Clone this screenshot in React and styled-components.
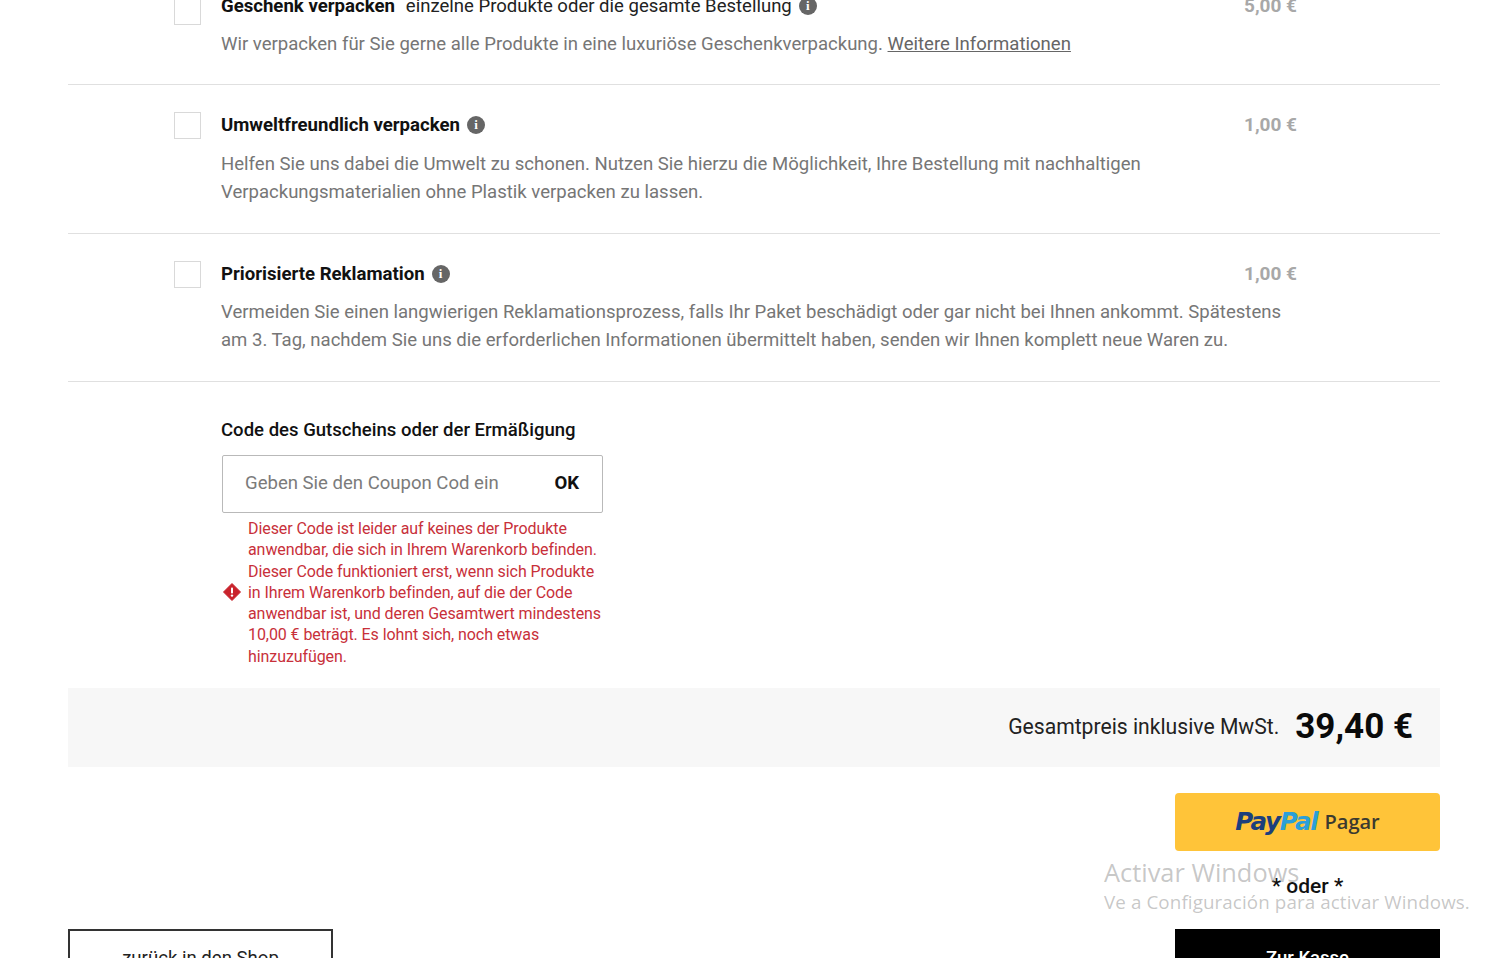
import React from "react";
import styled, { createGlobalStyle } from "styled-components";

const GlobalStyle = createGlobalStyle`
  html, body {
    margin: 0;
    padding: 0;
    background: #fff;
    overflow: hidden;
    font-family: Roboto, "Liberation Sans", sans-serif;
  }
`;

const Viewport = styled.div`
  position: relative;
  width: 1500px;
  height: 958px;
  overflow: hidden;
`;

const Page = styled.div`
  width: 1372px;
  margin: -15px 0 0 68px;
`;

const OptionRow = styled.div`
  display: grid;
  grid-template-columns: 27px 1fr auto;
  grid-template-rows: 27px auto;
  column-gap: 20px;
  align-content: start;
  padding: ${(p) => p.$top}px 143px 0 106px;
  height: ${(p) => p.$height}px;
  box-sizing: border-box;
  border-bottom: 1px solid #e0e0e0;
`;

const CheckBox = styled.div`
  width: 27px;
  height: 27px;
  margin-top: ${(p) => p.$nudge || 0}px;
  box-sizing: border-box;
  border: 1px solid #d9d9d9;
  background: #fff;
`;

const TitleLine = styled.div`
  display: flex;
  align-items: center;
  height: ${(p) => p.$height || 27}px;
  font-size: 18.6px;
  color: #111;
`;

const Title = styled.span`
  font-weight: 700;
`;

const TitleNote = styled.span`
  margin-left: 11px;
  font-size: 18.55px;
  color: #222;
`;

const InfoDot = styled.span`
  display: inline-flex;
  align-items: center;
  justify-content: center;
  width: 18px;
  height: 18px;
  margin-left: 7px;
  border-radius: 50%;
  background: #666;
  color: #fff;
  font-size: 13px;
  font-weight: 700;
  font-family: "Liberation Serif", serif;
`;

const Desc = styled.p`
  grid-column: 2 / 4;
  margin: 11px 0 0;
  font-size: 18.56px;
  line-height: 28px;
  color: #767676;
`;

const DocLink = styled.a`
  color: #666;
  text-decoration: underline;
`;

const Price = styled.div`
  height: ${(p) => p.$height || 27}px;
  line-height: ${(p) => p.$height || 27}px;
  text-align: right;
  font-size: 19px;
  font-weight: 700;
  color: #a8a8a8;
`;

const CouponSection = styled.section`
  padding: 35px 0 0 153px;
  height: 306px;
  box-sizing: border-box;
`;

const CouponLabel = styled.div`
  font-size: 18.56px;
  line-height: 26px;
  font-weight: 500;
  color: #111;
`;

const CouponBox = styled.div`
  display: flex;
  align-items: center;
  justify-content: space-between;
  width: 381px;
  height: 58px;
  margin: 12px 0 0 1px;
  padding: 0 23px 2px 22px;
  box-sizing: border-box;
  border: 1px solid #b9b9b9;
  border-radius: 2px;
  font-size: 18.56px;
  color: #7b7b7b;
`;

const OkLabel = styled.span`
  font-weight: 700;
  color: #111;
`;

const ErrorRow = styled.div`
  display: flex;
  align-items: center;
  width: 384px;
  margin-top: 5px;
`;

const ErrorIcon = styled.svg`
  flex: none;
  width: 20px;
  height: 20px;
  margin: 0 6px 0 1px;
`;

const ErrorText = styled.div`
  font-size: 16px;
  line-height: 21.25px;
  color: #c8303a;
  white-space: pre-line;
  letter-spacing: -0.08px;
`;

const TotalBar = styled.div`
  display: flex;
  align-items: center;
  justify-content: flex-end;
  height: 79px;
  padding: 0 27px 2px 0;
  box-sizing: border-box;
  background: #f7f7f7;
`;

const TotalLabel = styled.span`
  font-size: 21.15px;
  color: #222;
`;

const TotalValue = styled.span`
  margin-left: 16px;
  font-size: 35px;
  font-weight: 700;
  color: #0a0a0a;
`;

const BottomArea = styled.div`
  display: flex;
  justify-content: space-between;
  align-items: flex-end;
  margin-top: 26px;
`;

const CheckoutColumn = styled.div`
  display: flex;
  flex-direction: column;
  width: 265px;
`;

const PayPalButton = styled.div`
  display: flex;
  align-items: center;
  justify-content: center;
  height: 58px;
  padding-bottom: 1px;
  box-sizing: border-box;
  border-radius: 4px;
  background: #ffc439;
`;

const PayPalMark = styled.span`
  font-family: "DejaVu Sans", sans-serif;
  font-size: 24.5px;
  font-weight: 700;
  font-style: italic;
  letter-spacing: -1.2px;
  color: #1c3f7c;
`;

const PayPalAccent = styled.span`
  color: #2b9fd8;
`;

const PagarLabel = styled.span`
  margin-left: 7px;
  font-family: "Open Sans", sans-serif;
  font-size: 20px;
  font-weight: 600;
  color: #3b3a30;
`;

const OrLabel = styled.div`
  margin-top: 22px;
  height: 26px;
  line-height: 26px;
  text-align: center;
  font-size: 21px;
  font-weight: 500;
  color: #111;
`;

const OutlineButton = styled.div`
  width: 265px;
  height: 58px;
  box-sizing: border-box;
  display: flex;
  align-items: center;
  justify-content: center;
  border: 2px solid #333;
  font-size: 18.6px;
  color: #222;
`;

const BlackButton = styled.div`
  height: 58px;
  margin-top: 30px;
  display: flex;
  align-items: center;
  justify-content: center;
  background: #000;
  font-size: 18.5px;
  font-weight: 500;
  color: #fff;
`;

const Watermark = styled.div`
  position: absolute;
  left: 1104px;
  top: 855px;
  font-family: "Open Sans", sans-serif;
  color: rgba(120, 120, 120, 0.42);
  pointer-events: none;
`;

const WatermarkTitle = styled.div`
  font-size: 25.4px;
  line-height: 34px;
  font-weight: 400;
`;

const WatermarkText = styled.div`
  font-size: 18.8px;
  line-height: 26px;
  letter-spacing: 0.1px;
  white-space: nowrap;
`;

const options = [
  {
    title: "Umweltfreundlich verpacken",
    price: "1,00 €",
    lines: "Helfen Sie uns dabei die Umwelt zu schonen. Nutzen Sie hierzu die Möglichkeit, Ihre Bestellung mit nachhaltigen\nVerpackungsmaterialien ohne Plastik verpacken zu lassen.",
    height: 149,
    top: 27,
    titleHeight: 26,
    nudge: 0,
  },
  {
    title: "Priorisierte Reklamation",
    price: "1,00 €",
    lines: "Vermeiden Sie einen langwierigen Reklamationsprozess, falls Ihr Paket beschädigt oder gar nicht bei Ihnen ankommt. Spätestens am 3. Tag, nachdem Sie uns die erforderlichen Informationen übermittelt haben, senden wir Ihnen komplett neue Waren zu.",
    height: 148,
    top: 26,
    titleHeight: 27,
    nudge: 1,
  },
];

const errorMessage = `Dieser Code ist leider auf keines der Produkte
anwendbar, die sich in Ihrem Warenkorb befinden.
Dieser Code funktioniert erst, wenn sich Produkte
in Ihrem Warenkorb befinden, auf die der Code
anwendbar ist, und deren Gesamtwert mindestens
10,00 € beträgt. Es lohnt sich, noch etwas
hinzuzufügen.`;

export default function App() {
  return (
    <Viewport>
      <GlobalStyle />
      <Page>
        <OptionRow $height={100} $top={7}>
          <CheckBox $nudge={6} />
          <TitleLine>
            <Title>Geschenk verpacken</Title>
            <TitleNote>einzelne Produkte oder die gesamte Bestellung</TitleNote>
            <InfoDot>i</InfoDot>
          </TitleLine>
          <Price>5,00 €</Price>
          <Desc>
            Wir verpacken für Sie gerne alle Produkte in eine luxuriöse Geschenkverpackung.{" "}
            <DocLink>Weitere Informationen</DocLink>
          </Desc>
        </OptionRow>
        {options.map((option) => (
          <OptionRow key={option.title} $height={option.height} $top={option.top}>
            <CheckBox $nudge={option.nudge} />
            <TitleLine $height={option.titleHeight}>
              <Title>{option.title}</Title>
              <InfoDot>i</InfoDot>
            </TitleLine>
            <Price $height={option.titleHeight}>{option.price}</Price>
            <Desc>{option.lines}</Desc>
          </OptionRow>
        ))}
        <CouponSection>
          <CouponLabel>Code des Gutscheins oder der Ermäßigung</CouponLabel>
          <CouponBox>
            Geben Sie den Coupon Cod ein
            <OkLabel>OK</OkLabel>
          </CouponBox>
          <ErrorRow>
            <ErrorIcon viewBox="0 0 20 20">
              <path d="M10 1.5 18.5 10 10 18.5 1.5 10Z" fill="#c9232c" stroke="#c9232c" strokeLinejoin="round" />
              <rect x="9" y="5.5" width="2" height="6" rx="0.8" fill="#fff" />
              <circle cx="10" cy="13.6" r="1.2" fill="#fff" />
            </ErrorIcon>
            <ErrorText>{errorMessage}</ErrorText>
          </ErrorRow>
        </CouponSection>
        <TotalBar>
          <TotalLabel>Gesamtpreis inklusive MwSt.</TotalLabel>
          <TotalValue>39,40 €</TotalValue>
        </TotalBar>
        <BottomArea>
          <OutlineButton>zurück in den Shop</OutlineButton>
          <CheckoutColumn>
            <PayPalButton>
              <PayPalMark>
                Pay<PayPalAccent>Pal</PayPalAccent>
              </PayPalMark>
              <PagarLabel>Pagar</PagarLabel>
            </PayPalButton>
            <OrLabel>* oder *</OrLabel>
            <BlackButton>Zur Kasse</BlackButton>
          </CheckoutColumn>
        </BottomArea>
      </Page>
      <Watermark>
        <WatermarkTitle>Activar Windows</WatermarkTitle>
        <WatermarkText>Ve a Configuración para activar Windows.</WatermarkText>
      </Watermark>
    </Viewport>
  );
}
